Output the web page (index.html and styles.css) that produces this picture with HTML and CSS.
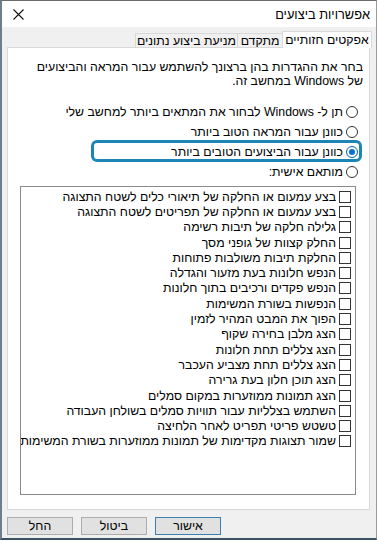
FILE: index.html
```html
<!DOCTYPE html>
<html lang="he" dir="rtl">
<head>
<meta charset="utf-8">
<title>אפשרויות ביצועים</title>
<link rel="stylesheet" href="styles.css">
</head>
<body>
<div class="window">
  <div class="titlebar">
    <span class="title">אפשרויות ביצועים</span>
    <span class="close"><svg width="11" height="11" viewBox="0 0 11 11"><path d="M0.5 0.5 L10.5 10.5 M10.5 0.5 L0.5 10.5" stroke="#111" stroke-width="1.1" fill="none"/></svg></span>
  </div>
  <div class="content">
    <div class="tabs">
      <div class="tab tab-active">אפקטים חזותיים</div>
      <div class="tab tab-adv">מתקדם</div>
      <div class="tab tab-dep">מניעת ביצוע נתונים</div>
    </div>
    <div class="panel">
      <p class="desc">בחר את ההגדרות בהן ברצונך להשתמש עבור המראה והביצועים<br>של Windows במחשב זה.</p>
      <div class="radios">
        <div class="radio-row"><span class="radio"></span><span>תן ל- Windows לבחור את המתאים ביותר למחשב שלי</span></div>
        <div class="radio-row"><span class="radio"></span><span>כוונן עבור המראה הטוב ביותר</span></div>
        <div class="radio-row"><span class="radio radio-on"></span><span>כוונן עבור הביצועים הטובים ביותר</span></div>
        <div class="radio-row"><span class="radio"></span><span>מותאם אישית:</span></div>
      </div>
      <div class="highlight"></div>
      <div class="listbox">
        <div class="item"><span class="check"></span><span>בצע עמעום או החלקה של תיאורי כלים לשטח התצוגה</span></div>
        <div class="item"><span class="check"></span><span>בצע עמעום או החלקה של תפריטים לשטח התצוגה</span></div>
        <div class="item"><span class="check"></span><span>גלילה חלקה של תיבות רשימה</span></div>
        <div class="item"><span class="check"></span><span>החלק קצוות של גופני מסך</span></div>
        <div class="item"><span class="check"></span><span>החלקת תיבות משולבות פתוחות</span></div>
        <div class="item"><span class="check"></span><span>הנפש חלונות בעת מזעור והגדלה</span></div>
        <div class="item"><span class="check"></span><span>הנפש פקדים ורכיבים בתוך חלונות</span></div>
        <div class="item"><span class="check"></span><span>הנפשות בשורת המשימות</span></div>
        <div class="item"><span class="check"></span><span>הפוך את המבט המהיר לזמין</span></div>
        <div class="item"><span class="check"></span><span>הצג מלבן בחירה שקוף</span></div>
        <div class="item"><span class="check"></span><span>הצג צללים תחת חלונות</span></div>
        <div class="item"><span class="check"></span><span>הצג צללים תחת מצביע העכבר</span></div>
        <div class="item"><span class="check"></span><span>הצג תוכן חלון בעת גרירה</span></div>
        <div class="item"><span class="check"></span><span>הצג תמונות ממוזערות במקום סמלים</span></div>
        <div class="item"><span class="check"></span><span>השתמש בצלליות עבור תוויות סמלים בשולחן העבודה</span></div>
        <div class="item"><span class="check"></span><span>טשטש פריטי תפריט לאחר הלחיצה</span></div>
        <div class="item"><span class="check"></span><span>שמור תצוגות מקדימות של תמונות ממוזערות בשורת המשימות</span></div>
      </div>
    </div>
    <div class="buttons">
      <button class="btn btn-default">אישור</button>
      <button class="btn">ביטול</button>
      <button class="btn">החל</button>
    </div>
  </div>
</div>
</body>
</html>
```
FILE: styles.css
```css
html, body {
  margin: 0;
  padding: 0;
}
body {
  width: 377px;
  height: 542px;
  overflow: hidden;
  background: #ffffff;
  font-family: "Liberation Sans", Arial, sans-serif;
  font-size: 12.3px;
  color: #000;
}
.window {
  box-sizing: border-box;
  width: 377px;
  height: 540px;
  border-top: 1px solid #6a6a6a;
  border-left: 2px solid #6d7f8e;
  border-right: 1px solid #9a9a9a;
  border-bottom: 2px solid #3a5166;
  background: #f0f0f0;
  display: flex;
  flex-direction: column;
}
.titlebar {
  height: 26px;
  flex: none;
  background: #fff;
  display: flex;
  align-items: center;
  justify-content: space-between;
  padding: 0 6px 0 11px;
}
.title {
  font-size: 12.8px;
}
.close {
  display: flex;
  align-items: center;
}
.content {
  flex: 1;
  padding: 4px 6px 0 5px;
  display: flex;
  flex-direction: column;
}
.tabs {
  height: 16px;
  flex: none;
  display: flex;
  align-items: flex-end;
  position: relative;
  z-index: 1;
}
.tab {
  box-sizing: border-box;
  height: 14px;
  border: 1px solid #d9d9d9;
  border-bottom: none;
  background: #f0f0f0;
  text-align: center;
  line-height: 14px;
  white-space: nowrap;
}
.tab-active {
  height: 17px;
  width: 90px;
  margin-right: -2px;
  margin-bottom: -1px;
  background: #fff;
  line-height: 17px;
}
.tab-adv {
  width: 45px;
  border-right: none;
}
.tab-dep {
  width: 102px;
  border-right: none;
}
.panel {
  position: relative;
  box-sizing: border-box;
  height: 463px;
  flex: none;
  border: 1px solid #d9d9d9;
  background: #fff;
  padding-top: 12px;
}
.desc {
  margin: 0 6px 0 0;
  line-height: 14px;
}
.radios {
  margin-top: 14px;
}
.radio-row {
  height: 20px;
  display: flex;
  align-items: center;
  gap: 3px;
  padding-right: 11px;
}
.radio {
  box-sizing: border-box;
  width: 12px;
  height: 12px;
  border: 1px solid #333;
  border-radius: 50%;
  background: #fff;
  flex: none;
  display: flex;
  align-items: center;
  justify-content: center;
}
.radio-on {
  border-color: #0063b1;
}
.radio-on::after {
  content: "";
  width: 6px;
  height: 6px;
  border-radius: 50%;
  background: #0a6ed8;
}
.highlight {
  position: absolute;
  box-sizing: border-box;
  left: 83px;
  top: 92px;
  width: 271px;
  height: 22px;
  border: 3px solid #1b86b6;
  border-radius: 6px;
}
.listbox {
  box-sizing: border-box;
  height: 309px;
  margin: 4px 13px 0 12px;
  border: 1px solid #8a8a8a;
  padding-top: 2px;
}
.item {
  height: 15.3px;
  display: flex;
  align-items: center;
  gap: 3px;
  padding-right: 4px;
  white-space: nowrap;
}
.check {
  box-sizing: border-box;
  width: 12px;
  height: 12px;
  border: 1px solid #333;
  background: #fff;
  flex: none;
}
.buttons {
  margin-top: 7px;
  display: flex;
  justify-content: flex-end;
  gap: 8px;
}
.btn {
  box-sizing: border-box;
  width: 66px;
  height: 18px;
  margin: 0;
  padding: 0;
  border: 1px solid #adadad;
  background: #e1e1e1;
  font-family: "Liberation Sans", Arial, sans-serif;
  font-size: 12.3px;
  color: #000;
}
.btn-default {
  border-color: #3c7fb1;
}
```
